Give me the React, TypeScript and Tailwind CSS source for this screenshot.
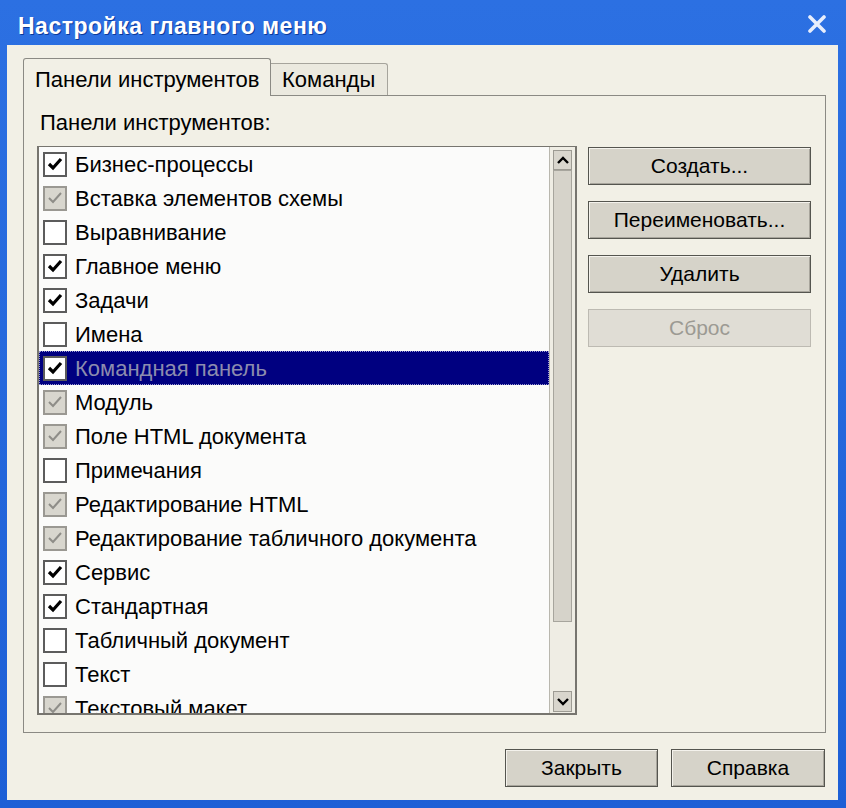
import React from "react";

type CheckState = "on" | "off" | "gray";

interface Item {
  label: string;
  state: CheckState;
  selected?: boolean;
}

const items: Item[] = [
  { label: "Бизнес-процессы", state: "on" },
  { label: "Вставка элементов схемы", state: "gray" },
  { label: "Выравнивание", state: "off" },
  { label: "Главное меню", state: "on" },
  { label: "Задачи", state: "on" },
  { label: "Имена", state: "off" },
  { label: "Командная панель", state: "on", selected: true },
  { label: "Модуль", state: "gray" },
  { label: "Поле HTML документа", state: "gray" },
  { label: "Примечания", state: "off" },
  { label: "Редактирование HTML", state: "gray" },
  { label: "Редактирование табличного документа", state: "gray" },
  { label: "Сервис", state: "on" },
  { label: "Стандартная", state: "on" },
  { label: "Табличный документ", state: "off" },
  { label: "Текст", state: "off" },
  { label: "Текстовый макет", state: "gray" },
];

function CheckBox({ state }: { state: CheckState }) {
  const gray = state === "gray";
  return (
    <div
      className={`w-[24px] h-[25px] shrink-0 border-2 flex items-center justify-center ${
        gray ? "border-[#9a9892] bg-[#d8d6ce]" : "border-[#5c5c5c] bg-white"
      }`}
    >
      {state !== "off" && (
        <svg width="16" height="14" viewBox="0 0 16 14">
          <polyline
            points="2,7 6,11 14,2"
            fill="none"
            stroke={gray ? "#8e8d88" : "#000"}
            strokeWidth={gray ? 2 : 3.2}
          />
        </svg>
      )}
    </div>
  );
}

function Button({ label, disabled }: { label: string; disabled?: boolean }) {
  return (
    <button
      className={`h-[38px] w-full border text-[21px] ${
        disabled
          ? "border-[#bdbab2] bg-[#e0ddd5] text-[#9c9a93]"
          : "border-[#55554f] bg-[#d6d3c9] text-black shadow-[inset_1px_1px_0_#f4f2ec,inset_-1px_-1px_0_#a8a59c]"
      }`}
    >
      {label}
    </button>
  );
}

export default function App() {
  return (
    <div
      className="w-[846px] h-[808px] flex flex-col bg-gradient-to-b from-[#2c70e2] to-[#1d5fd6] pl-[7px] pr-[8px] pb-[8px] overflow-hidden"
      style={{ fontFamily: '"Liberation Sans", Arial, sans-serif' }}
    >
      {/* title bar */}
      <div className="h-[45px] shrink-0 flex items-center justify-between pl-[11px] pr-[11px]">
        <span className="text-white font-bold text-[23px] tracking-[0.5px] mt-[7px] [text-shadow:1px_1px_0_#0b3a9a]">
          Настройка главного меню
        </span>
        <svg width="20" height="18" viewBox="0 0 20 18" className="mt-[3px]">
          <path d="M3 2 L17 16 M17 2 L3 16" stroke="#e8eefc" strokeWidth="3.6" strokeLinecap="round" />
        </svg>
      </div>

      {/* body */}
      <div className="flex-1 bg-[#f2f0e6] flex flex-col pt-[13px] pl-[16px] pr-[12px]">
        {/* tabs */}
        <div className="flex items-end h-[37px] shrink-0">
          <div className="h-[38px] w-[248px] border border-b-0 border-[#8b8a84] rounded-t-[3px] bg-[#f2f0e6] relative z-10 -mb-px flex items-center pl-[11px] pt-[4px] text-[22px] text-black">
            Панели инструментов
          </div>
          <div className="h-[32px] w-[117px] border border-l-0 border-b-0 border-[#a6a49c] rounded-tr-[3px] bg-[#ebe9df] flex items-center pl-[11px] text-[22px] text-black">
            Команды
          </div>
        </div>

        {/* tab panel */}
        <div className="h-[638px] border border-[#8b8a84] flex flex-col pt-[15px] pl-[13px] pr-[14px] pb-[17px]">
          <div className="h-[35px] pl-[3px] text-[22px] text-black leading-[24px]">Панели инструментов:</div>
          <div className="flex-1 flex gap-[11px] min-h-0">
            {/* list */}
            <div className="w-[540px] border-2 border-t border-[#77756f] bg-[#fbfbfa] flex min-h-0 overflow-hidden">
              <div className="flex-1 flex flex-col overflow-hidden">
                {items.map((it) => (
                  <div
                    key={it.label}
                    className={`h-[34px] shrink-0 flex items-center gap-[8px] pl-[4px] ${
                      it.selected ? "bg-[#000080] outline-1 outline-dotted outline-[#9a9ad0] -outline-offset-1" : ""
                    }`}
                  >
                    <CheckBox state={it.state} />
                    <span
                      className={`text-[22px] whitespace-nowrap ${
                        it.selected ? "text-[#8c8cae]" : "text-black"
                      }`}
                    >
                      {it.label}
                    </span>
                  </div>
                ))}
              </div>
              {/* scrollbar */}
              <div className="w-[26px] shrink-0 border-l border-[#b9b7ae] bg-[#efede4] flex flex-col px-[3px] pt-[3px] pb-[1px]">
                <div className="h-[20px] border border-[#9d9b93] bg-[#d9d6cd] flex items-center justify-center">
                  <svg width="14" height="10" viewBox="0 0 14 10">
                    <polyline points="2,8 7,3 12,8" fill="none" stroke="#000" strokeWidth="2.4" />
                  </svg>
                </div>
                <div className="h-[452px] border border-[#a7a59d] bg-[#d6d3ca]" />
                <div className="flex-1" />
                <div className="h-[21px] border border-[#9d9b93] bg-[#d9d6cd] flex items-center justify-center">
                  <svg width="14" height="10" viewBox="0 0 14 10">
                    <polyline points="2,2 7,7 12,2" fill="none" stroke="#000" strokeWidth="2.4" />
                  </svg>
                </div>
              </div>
            </div>

            {/* side buttons */}
            <div className="flex-1 flex flex-col gap-[16px] pt-[1px]">
              <Button label="Создать..." />
              <Button label="Переименовать..." />
              <Button label="Удалить" />
              <Button label="Сброс" disabled />
            </div>
          </div>
        </div>

        {/* bottom buttons */}
        <div className="flex justify-end gap-[13px] pt-[16px] pr-[1px]">
          <div className="w-[153px]">
            <Button label="Закрыть" />
          </div>
          <div className="w-[154px]">
            <Button label="Справка" />
          </div>
        </div>
      </div>
    </div>
  );
}
